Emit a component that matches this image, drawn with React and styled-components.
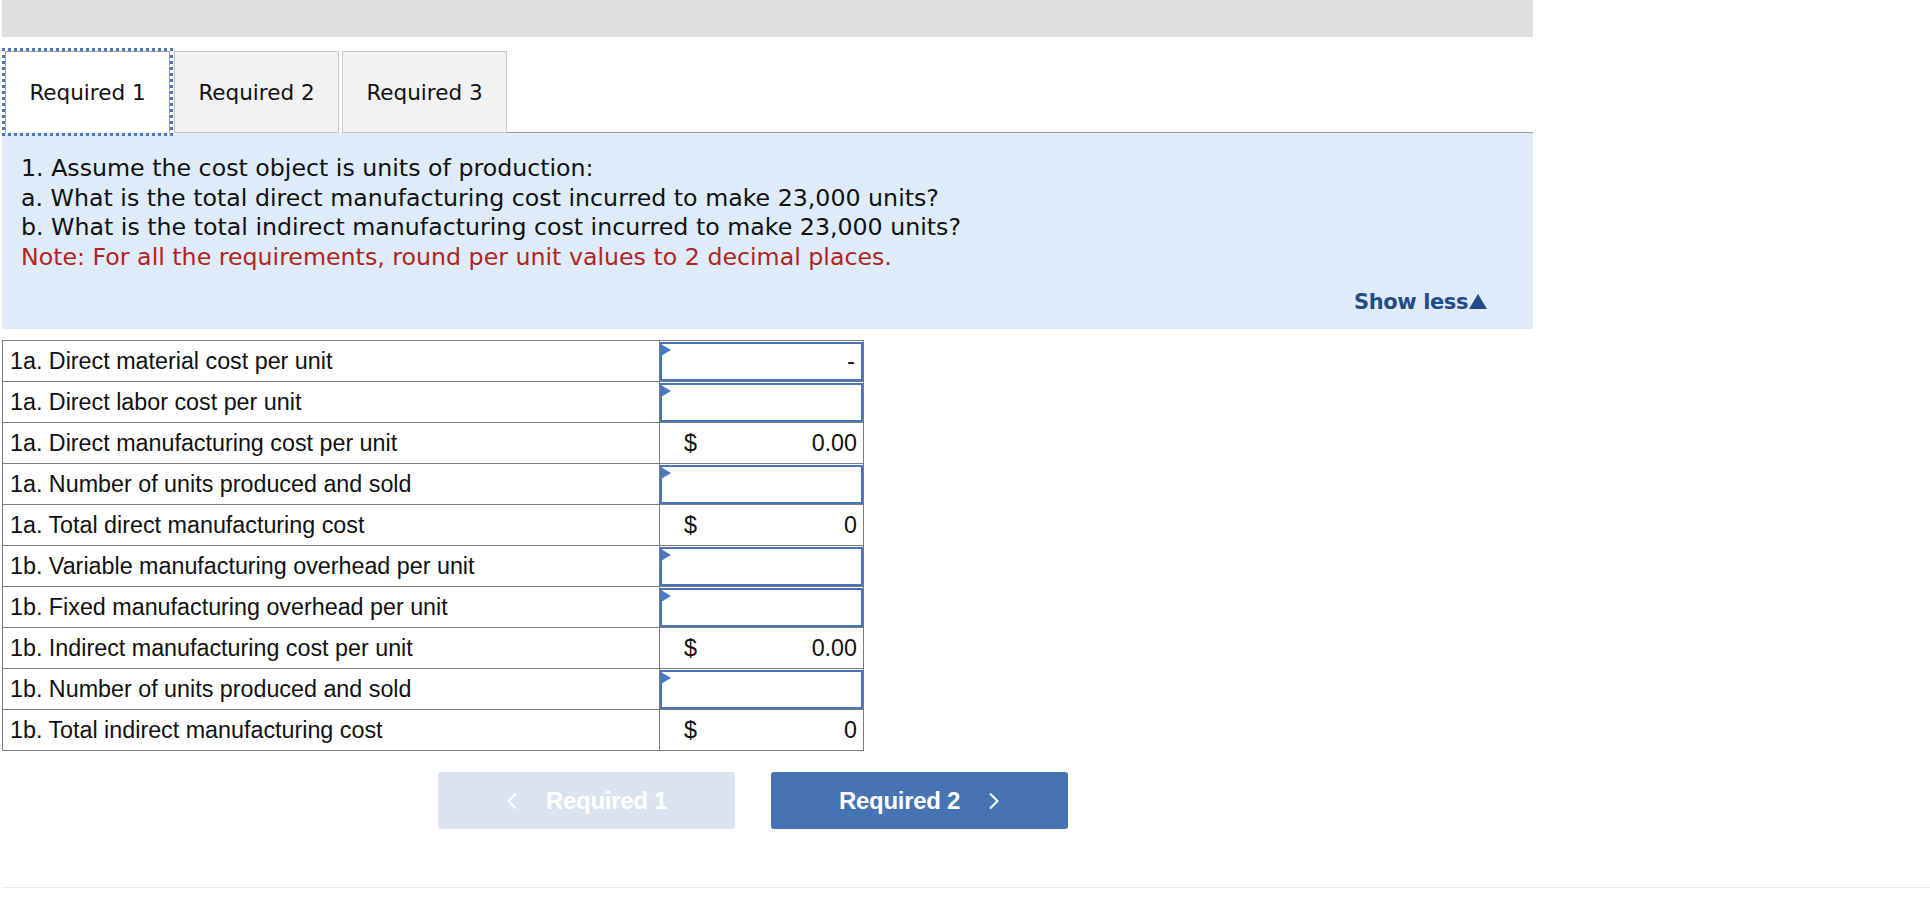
import React from 'react';
import styled, { createGlobalStyle } from 'styled-components';

const rows = [
  { label: '1a. Direct material cost per unit', input: true, value: '-' },
  { label: '1a. Direct labor cost per unit', input: true },
  { label: '1a. Direct manufacturing cost per unit', dollar: true, value: '0.00' },
  { label: '1a. Number of units produced and sold', input: true },
  { label: '1a. Total direct manufacturing cost', dollar: true, value: '0' },
  { label: '1b. Variable manufacturing overhead per unit', input: true },
  { label: '1b. Fixed manufacturing overhead per unit', input: true },
  { label: '1b. Indirect manufacturing cost per unit', dollar: true, value: '0.00' },
  { label: '1b. Number of units produced and sold', input: true },
  { label: '1b. Total indirect manufacturing cost', dollar: true, value: '0' },
];

const ChevronIcon = ({ dir }) => (
  <ChevronSvg width="12" height="18" viewBox="0 0 12 18">
    <path
      d={dir === 'left' ? 'M10 1.5 L2.5 9 L10 16.5' : 'M2 1.5 L9.5 9 L2 16.5'}
      fill="none"
      stroke="currentColor"
      strokeWidth="2"
    />
  </ChevronSvg>
);

const App = () => {
  return (
    <>
      <GlobalStyle />
      <Page>
        <TopBar />
        <TabRow>
          <Tab $active>Required 1</Tab>
          <Tab>Required 2</Tab>
          <Tab>Required 3</Tab>
          <TabFill />
        </TabRow>
        <Panel>
          <Question>
            <div>1. Assume the cost object is units of production:</div>
            <div>a. What is the total direct manufacturing cost incurred to make 23,000 units?</div>
            <div>b. What is the total indirect manufacturing cost incurred to make 23,000 units?</div>
            <Note>Note: For all the requirements, round per unit values to 2 decimal places.</Note>
          </Question>
          <ShowLess>
            Show less<Arrow />
          </ShowLess>
        </Panel>

        <Table>
          <tbody>
            {rows.map((row) => (
              <tr key={row.label}>
                <LabelCell>{row.label}</LabelCell>
                <ValueCell>
                  {row.input ? (
                    <InputBox>
                      <Marker />
                      {row.value}
                    </InputBox>
                  ) : (
                    <Computed>
                      <span>$</span>
                      <span>{row.value}</span>
                    </Computed>
                  )}
                </ValueCell>
              </tr>
            ))}
          </tbody>
        </Table>

        <NavRow>
          <NavButton $disabled>
            <ChevronIcon dir="left" />
            Required 1
          </NavButton>
          <NavButton>
            Required 2
            <ChevronIcon dir="right" />
          </NavButton>
        </NavRow>
        <Footer />
      </Page>
    </>
  );
};

const GlobalStyle = createGlobalStyle`
  body {
    margin: 0;
    background: #ffffff;
    font-family: "Liberation Sans", Arial, sans-serif;
  }
`;

const Page = styled.div`
  width: 1930px;
  padding-left: 2px;
  box-sizing: border-box;
`;

const TopBar = styled.div`
  width: 1531px;
  height: 37px;
  background: #dfdfdf;
`;

const TabRow = styled.div`
  display: flex;
  align-items: flex-end;
  width: 1531px;
  margin-top: 14px;
  gap: 3px;
`;

const Tab = styled.div`
  width: 165px;
  height: 82px;
  box-sizing: border-box;
  display: flex;
  align-items: center;
  justify-content: center;
  font-family: "DejaVu Sans", sans-serif;
  font-size: 21.5px;
  color: #111;
  background: ${(p) => (p.$active ? '#ffffff' : '#f2f2f2')};
  border: 1px solid ${(p) => (p.$active ? '#9a9a9a' : '#c8c8c8')};
  border-bottom: ${(p) => (p.$active ? 'none' : '1px solid #c8c8c8')};
  outline: ${(p) => (p.$active ? '3px dotted #4a76c0' : 'none')};
  outline-offset: 0;
  margin-left: ${(p) => (p.$active ? '3px' : '0')};
  margin-right: ${(p) => (p.$active ? '1px' : '0')};
`;

const TabFill = styled.div`
  flex: 1;
  height: 1px;
  background: #9a9a9a;
  margin-left: -3px;
`;

const Panel = styled.div`
  width: 1531px;
  height: 196px;
  box-sizing: border-box;
  padding: 21px 46px 15px 19px;
  background: #deebf8;
  display: flex;
  flex-direction: column;
  justify-content: space-between;
`;

const Question = styled.div`
  font-family: "DejaVu Sans", sans-serif;
  font-size: 23.7px;
  line-height: 29.5px;
  color: #111;
`;

const Note = styled.div`
  color: #b2231c;
`;

const ShowLess = styled.div`
  align-self: flex-end;
  font-family: "DejaVu Sans", sans-serif;
  font-weight: bold;
  font-size: 21px;
  letter-spacing: -0.4px;
  color: #234c86;
  display: flex;
  align-items: center;
`;

const Arrow = styled.span`
  width: 0;
  height: 0;
  margin-left: 1px;
  margin-bottom: 2px;
  border-left: 9px solid transparent;
  border-right: 9px solid transparent;
  border-bottom: 15px solid #234c86;
`;

const Table = styled.table`
  margin-top: 11px;
  border-collapse: collapse;
  width: 862px;
  font-size: 23.3px;
  color: #111;
`;

const LabelCell = styled.td`
  width: 657px;
  height: 41px;
  box-sizing: border-box;
  padding: 0 7px;
  border: 1px solid #7b7b7b;
  vertical-align: middle;
`;

const ValueCell = styled.td`
  height: 41px;
  box-sizing: border-box;
  padding: 0;
  border: 1px solid #7b7b7b;
  vertical-align: middle;
`;

const InputBox = styled.div`
  position: relative;
  height: 39px;
  box-sizing: border-box;
  border: 2px solid #4a74b6;
  display: flex;
  align-items: center;
  justify-content: flex-end;
  padding-right: 6px;
  background: #fff;
`;

const Marker = styled.span`
  position: absolute;
  top: 0;
  left: -1px;
  width: 0;
  height: 0;
  border-top: 6px solid transparent;
  border-bottom: 6px solid transparent;
  border-left: 10px solid #4a7ac4;
`;

const Computed = styled.div`
  display: flex;
  justify-content: space-between;
  align-items: center;
  padding: 0 6px 0 24px;
`;

const NavRow = styled.div`
  display: flex;
  gap: 36px;
  padding-left: 436px;
  margin-top: 21px;
`;

const NavButton = styled.div`
  width: 297px;
  height: 57px;
  border-radius: 3px;
  display: flex;
  align-items: center;
  justify-content: center;
  gap: 28px;
  font-family: "Liberation Sans", Arial, sans-serif;
  font-weight: bold;
  font-size: 24px;
  letter-spacing: -0.3px;
  color: #ffffff;
  background: ${(p) => (p.$disabled ? '#dae3ef' : '#4674b2')};
`;

const ChevronSvg = styled.svg`
  display: block;
  flex: none;
`;

const Footer = styled.div`
  margin-top: 58px;
  height: 1px;
  background: #ececec;
`;

export default App;
